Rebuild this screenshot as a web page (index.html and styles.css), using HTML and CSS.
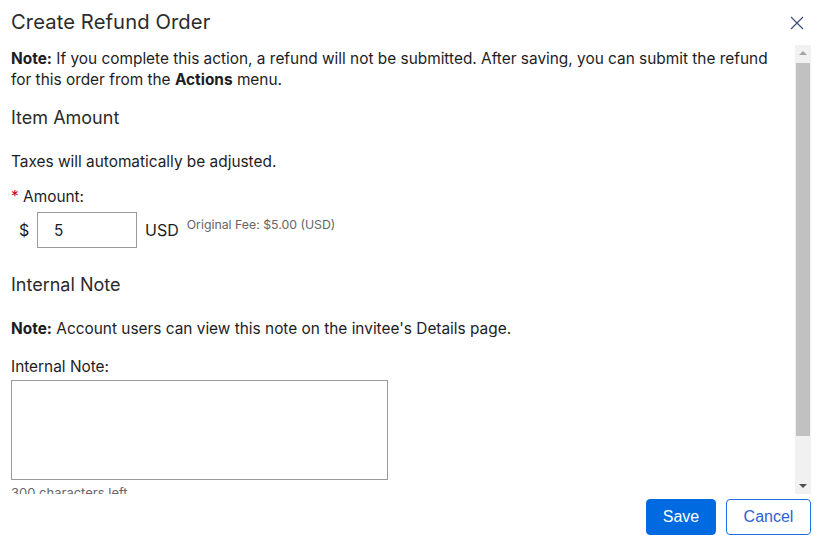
FILE: index.html
```html
<!DOCTYPE html>
<html>
<head>
<meta charset="utf-8">
<link rel="stylesheet" href="styles.css">
</head>
<body>
<div class="dialog">
  <header class="head">
    <h1 class="title">Create Refund Order</h1>
    <button class="close" aria-label="Close">
      <svg width="14" height="14" viewBox="0 0 14 14"><path d="M1 1 L13 13 M13 1 L1 13" stroke="#3d4f7a" stroke-width="1.2" fill="none"/></svg>
    </button>
  </header>
  <div class="scrollwrap">
    <div class="content">
      <p class="note"><b>Note:</b> If you complete this action, a refund will not be submitted. After saving, you can submit the refund for this order from the <b>Actions</b> menu.</p>
      <h2 class="section">Item Amount</h2>
      <p class="text taxes">Taxes will automatically be adjusted.</p>
      <label class="label"><span class="req">*</span> Amount:</label>
      <div class="amount-row">
        <span class="cur">$</span>
        <input class="amount" type="text" value="5">
        <span class="usd">USD</span>
        <span class="orig">Original Fee: $5.00 (USD)</span>
      </div>
      <h2 class="section sec2">Internal Note</h2>
      <p class="text note2"><b>Note:</b> Account users can view this note on the invitee's Details page.</p>
      <label class="label lab2">Internal Note:</label>
      <textarea class="notebox"></textarea>
      <div class="counter">300 characters left</div>
    </div>
    <div class="sbar">
      <div class="arrow up"></div>
      <div class="thumb"></div>
      <div class="arrow down"></div>
    </div>
  </div>
  <footer class="foot">
    <button class="btn save">Save</button>
    <button class="btn cancel">Cancel</button>
  </footer>
</div>
</body>
</html>
```
FILE: styles.css
```css
* { box-sizing: border-box; }
html, body { margin: 0; padding: 0; background: #fff; }
body { font-family: Inter, "Noto Sans", sans-serif; color: #1d1d1f; width: 822px; height: 545px; overflow: hidden; }
.dialog { width: 822px; height: 545px; display: flex; flex-direction: column; }
.head { height: 45px; display: flex; align-items: flex-start; justify-content: space-between; padding: 0 18px 0 11px; }
.title { margin: 9px 0 0; font-size: 20.2px; font-weight: 400; color: #2b2b2b; letter-spacing: 0.1px; }
.close { margin-top: 16px; background: none; border: 0; padding: 0; width: 14px; height: 14px; cursor: pointer; }
.close svg { display: block; }
.scrollwrap { position: relative; height: 449px; width: 811px; overflow: hidden; }
.content { padding: 0 21px 0 11px; }
.note { margin: 3px 0 0; font-size: 15.4px; line-height: 21px; }
.section { margin: 17px 0 0; font-size: 18px; font-weight: 400; line-height: 22px; color: #2b2b2b; }
.text { font-size: 15.4px; line-height: 21px; margin: 0; }
.taxes { margin-top: 22px; }
.label { display: block; font-size: 15.4px; line-height: 21px; margin-top: 14px; }
.req { color: #d0021b; }
.amount-row { display: flex; align-items: center; margin-top: 5px; padding-left: 8px; }
.cur { font-size: 16px; width: 18px; }
.amount { width: 100px; height: 36px; border: 1px solid #9a9a9a; border-radius: 0; font: inherit; font-size: 15.4px; padding: 0 16px; color: #1d1d1f; outline: none; }
.usd { font-size: 16px; margin-left: 8px; }
.orig { font-size: 12.3px; color: #666; margin-left: 8px; align-self: flex-start; margin-top: 5px; }
.sec2 { margin-top: 26px; }
.note2 { margin-top: 22px; }
.lab2 { margin-top: 17px; }
.notebox { display: block; width: 377px; height: 100px; margin-top: 3px; border: 1px solid #9a9a9a; border-radius: 0; resize: none; outline: none; }
.counter { font-size: 13px; color: #666; margin-top: 5px; line-height: 16px; }
.sbar { position: absolute; top: 0; right: 0; width: 16px; height: 449px; background: #f1f1f1; display: flex; flex-direction: column; align-items: center; }
.arrow { width: 0; height: 0; border-left: 4px solid transparent; border-right: 4px solid transparent; }
.arrow.up { border-bottom: 4px solid #a3a3a3; margin-top: 6px; }
.arrow.down { border-top: 4px solid #505050; margin-top: auto; margin-bottom: 6px; }
.thumb { width: 14px; height: 373px; background: #c1c1c1; margin-top: 8px; }
.foot { height: 51px; display: flex; justify-content: flex-end; align-items: flex-start; gap: 10px; padding: 5px 11px 0 0; }
.btn { font-family: "Liberation Sans", Arial, sans-serif; font-size: 16px; height: 36px; border-radius: 4px; cursor: pointer; }
.save { width: 70px; background: #006ae1; color: #fff; border: 1px solid #006ae1; }
.cancel { width: 85px; background: #fff; color: #2e5fd0; border: 1px solid #1a6ee0; }
```
